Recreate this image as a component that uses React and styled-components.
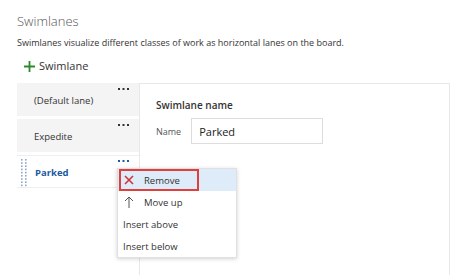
import React from "react";
import styled, { createGlobalStyle } from "styled-components";

const GlobalStyle = createGlobalStyle`
  html, body {
    margin: 0;
    padding: 0;
    background: #ffffff;
  }
  body {
    font-family: "Open Sans", "Noto Sans", "Liberation Sans", sans-serif;
    color: #333333;
  }
`;

const lanes = [
  { id: 1, name: "(Default lane)" },
  { id: 2, name: "Expedite" },
  { id: 3, name: "Parked", selected: true },
];

const menuItems = [
  { id: "remove", label: "Remove", icon: "x", focused: true },
  { id: "up", label: "Move up", icon: "up" },
  { id: "above", label: "Insert above" },
  { id: "below", label: "Insert below" },
];

const Dots = ({ color }) => (
  <svg width="11" height="3" viewBox="0 0 11 3">
    <rect x="0" y="0" width="2" height="2" fill={color} />
    <rect x="4.5" y="0" width="2" height="2" fill={color} />
    <rect x="9" y="0" width="2" height="2" fill={color} />
  </svg>
);

const Gripper = () => (
  <svg width="6" height="28" viewBox="0 0 6 28">
    {Array.from({ length: 9 }).map((_, r) =>
      [0, 4].map((c) => (
        <rect key={`${r}-${c}`} x={c} y={r * 3.2} width="1.6" height="1.6" fill="#8fa9c8" />
      ))
    )}
  </svg>
);

const App = () => {
  return (
    <Page>
      <GlobalStyle />
      <Title>Swimlanes</Title>
      <Description>
        Swimlanes visualize different classes of work as horizontal lanes on the board.
      </Description>
      <AddButton>
        <svg width="11" height="11" viewBox="0 0 11 11">
          <path d="M5.5 0v11M0 5.5h11" stroke="#2c8a2c" strokeWidth="1.8" />
        </svg>
        Swimlane
      </AddButton>
      <Content>
        <LaneList>
          {lanes.map((lane) => (
            <Lane key={lane.id} selected={lane.selected}>
              {lane.selected && (
                <GripWrap>
                  <Gripper />
                </GripWrap>
              )}
              <LaneName selected={lane.selected}>{lane.name}</LaneName>
              <MoreButton>
                <Dots color={lane.selected ? "#1e5aa0" : "#333"} />
              </MoreButton>
            </Lane>
          ))}
        </LaneList>
        <Panel>
          <PanelTitle>Swimlane name</PanelTitle>
          <FieldRow>
            <FieldLabel>Name</FieldLabel>
            <TextInput>Parked</TextInput>
          </FieldRow>
        </Panel>
        <Menu>
          {menuItems.map((item) => (
            <MenuItem key={item.id} focused={item.focused}>
              {item.focused && <FocusRing />}
              {item.icon === "x" && (
                <MenuIcon>
                  <svg width="10" height="10" viewBox="0 0 10 10">
                    <path d="M1 1l8 8M9 1l-8 8" stroke="#d13438" strokeWidth="1.6" />
                  </svg>
                </MenuIcon>
              )}
              {item.icon === "up" && (
                <MenuIcon>
                  <svg width="10" height="12" viewBox="0 0 10 12">
                    <path d="M5 1v11M1 5l4-4 4 4" stroke="#555" strokeWidth="1" fill="none" />
                  </svg>
                </MenuIcon>
              )}
              <MenuLabel indent={!!item.icon}>{item.label}</MenuLabel>
            </MenuItem>
          ))}
        </Menu>
      </Content>
    </Page>
  );
};

export default App;

const Page = styled.div`
  width: 474px;
  height: 275px;
  box-sizing: border-box;
  padding: 12px 0 0 17px;
  overflow: hidden;
`;

const Title = styled.div`
  font-size: 13px;
  font-weight: 300;
  color: #555;
  line-height: 18px;
`;

const Description = styled.div`
  margin-top: 6px;
  font-size: 9px;
  color: #333;
  line-height: 14px;
`;

const AddButton = styled.div`
  display: flex;
  align-items: center;
  gap: 4px;
  margin-top: 8px;
  padding-left: 7px;
  font-size: 11px;
  color: #333;
  line-height: 16px;
`;

const Content = styled.div`
  position: relative;
  display: flex;
  margin-top: 9px;
  height: 200px;
`;

const LaneList = styled.div`
  width: 122px;
  display: flex;
  flex-direction: column;
  gap: 3px;
`;

const Lane = styled.div`
  position: relative;
  display: flex;
  align-items: center;
  height: 33px;
  box-sizing: border-box;
  padding-left: ${(p) => (p.selected ? "4px" : "17px")};
  padding-top: 2px;
  background: ${(p) => (p.selected ? "#ffffff" : "#f4f4f4")};
  border-top: 1px solid ${(p) => (p.selected ? "#eeeeee" : "#f4f4f4")};
  border-bottom: 1px solid ${(p) => (p.selected ? "#eeeeee" : "#f4f4f4")};
`;

const GripWrap = styled.div`
  display: flex;
  margin-right: 8px;
`;

const LaneName = styled.span`
  font-size: 9.5px;
  font-weight: ${(p) => (p.selected ? 700 : 400)};
  color: ${(p) => (p.selected ? "#1e5aa0" : "#333")};
`;

const MoreButton = styled.div`
  position: absolute;
  top: 4px;
  right: 10px;
  display: flex;
`;

const Panel = styled.div`
  flex: 1;
  max-width: 311px;
  border-top: 1px solid #e8e8e8;
  border-right: 1px solid #e8e8e8;
  border-left: 1px solid #e8e8e8;
  box-sizing: border-box;
  padding: 14px 0 0 16px;
`;

const PanelTitle = styled.div`
  font-size: 10px;
  font-weight: 600;
  color: #333;
  line-height: 14px;
`;

const FieldRow = styled.div`
  display: flex;
  align-items: center;
  margin-top: 6px;
  gap: 10px;
`;

const FieldLabel = styled.span`
  font-size: 9px;
  color: #555;
`;

const TextInput = styled.div`
  width: 132px;
  height: 26px;
  box-sizing: border-box;
  border: 1px solid #dddddd;
  padding-left: 7px;
  display: flex;
  align-items: center;
  font-size: 11px;
  color: #222;
`;

const Menu = styled.div`
  position: absolute;
  left: 100px;
  top: 85px;
  width: 118px;
  background: #ffffff;
  border: 1px solid #e0e0e0;
  box-shadow: 0 1px 4px rgba(0, 0, 0, 0.18);
  display: flex;
  flex-direction: column;
`;

const MenuItem = styled.div`
  position: relative;
  display: flex;
  align-items: center;
  height: 22px;
  padding-left: 5px;
  background: ${(p) => (p.focused ? "#deecf9" : "transparent")};
`;

const FocusRing = styled.div`
  position: absolute;
  left: 1px;
  top: 0;
  width: 80px;
  height: 22px;
  box-sizing: border-box;
  border: 2px solid #e0403c;
`;

const MenuIcon = styled.span`
  display: flex;
  width: 12px;
  justify-content: center;
  margin-left: 0;
`;

const MenuLabel = styled.span`
  font-size: 9.5px;
  color: #333;
  margin-left: ${(p) => (p.indent ? "9px" : "0")};
`;
